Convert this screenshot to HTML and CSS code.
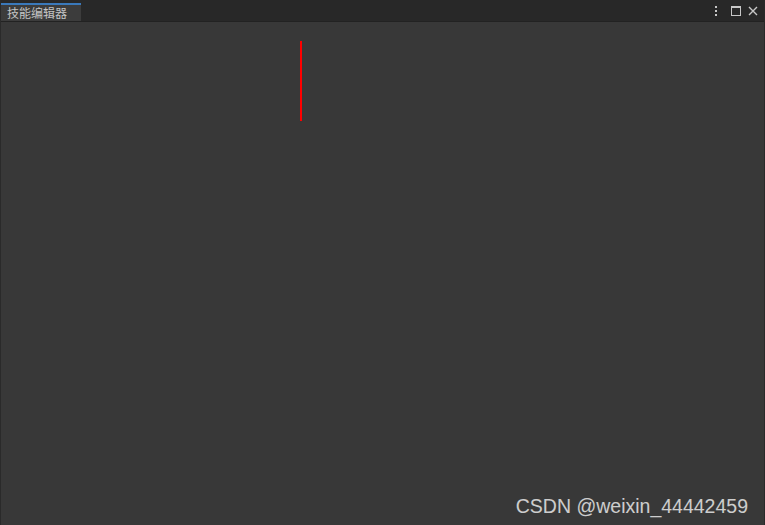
FILE: index.html
```html
<!DOCTYPE html>
<html>
<head>
<meta charset="utf-8">
<link rel="stylesheet" href="styles.css">
</head>
<body>
<div class="window">
  <div class="tabbar">
    <div class="tab"><span class="tab-label">技能编辑器</span></div>
    <div class="controls">
      <svg class="icon dots" width="8" height="12" viewBox="0 0 8 12"><rect x="3" y="1" width="2" height="2" fill="#c8c8c8"/><rect x="3" y="5" width="2" height="2" fill="#c8c8c8"/><rect x="3" y="9" width="2" height="2" fill="#c8c8c8"/></svg>
      <svg class="icon" width="12" height="12" viewBox="0 0 12 12"><rect x="1.5" y="1.5" width="9" height="9" fill="none" stroke="#c8c8c8" stroke-width="1"/><rect x="1" y="1" width="10" height="2" fill="#c8c8c8"/></svg>
      <svg class="icon close" width="12" height="12" viewBox="0 0 12 12"><path d="M2 2 L10 10 M10 2 L2 10" stroke="#c8c8c8" stroke-width="1.4"/></svg>
    </div>
  </div>
  <div class="content">
    <div class="cursor"></div>
    <div class="watermark">CSDN @weixin_44442459</div>
  </div>
</div>
</body>
</html>
```
FILE: styles.css
```css
html, body {
  margin: 0;
  padding: 0;
  width: 765px;
  height: 525px;
  overflow: hidden;
  background: #383838;
}
.window {
  width: 765px;
  height: 525px;
  display: flex;
  flex-direction: column;
  box-sizing: border-box;
  border-left: 1px solid #2a2a2a;
  border-right: 1px solid #2a2a2a;
}
.tabbar {
  height: 22px;
  flex: none;
  background: #282828;
  border-bottom: 1px solid #222;
  box-sizing: border-box;
  display: flex;
  align-items: stretch;
  justify-content: space-between;
  padding-top: 3px;
}
.tab {
  width: 80px;
  background: #3c3c3c;
  border-top: 2px solid #3a79bb;
  box-sizing: border-box;
  display: flex;
  align-items: center;
  padding-left: 6px;
}
.tab-label {
  font-family: "Noto Sans CJK SC", "Noto Sans", sans-serif;
  font-size: 12px;
  color: #c4c4c4;
  line-height: 14px;
}
.controls {
  display: flex;
  align-items: center;
  gap: 3px;
  padding-right: 5px;
  margin-top: -3px;
}
.dots { margin-right: 7px; }
.close { margin-left: 2px; }
.icon { display: block; }
.content {
  flex: 1;
  position: relative;
  background: #383838;
}
.cursor {
  position: absolute;
  left: 299px;
  top: 19px;
  width: 2px;
  height: 80px;
  background: #ff0000;
}
.watermark {
  position: absolute;
  right: 16px;
  bottom: 7px;
  font-family: "Liberation Sans", Arial, sans-serif;
  font-size: 19.5px;
  color: #e8e8e8;
  opacity: 0.85;
}
```
